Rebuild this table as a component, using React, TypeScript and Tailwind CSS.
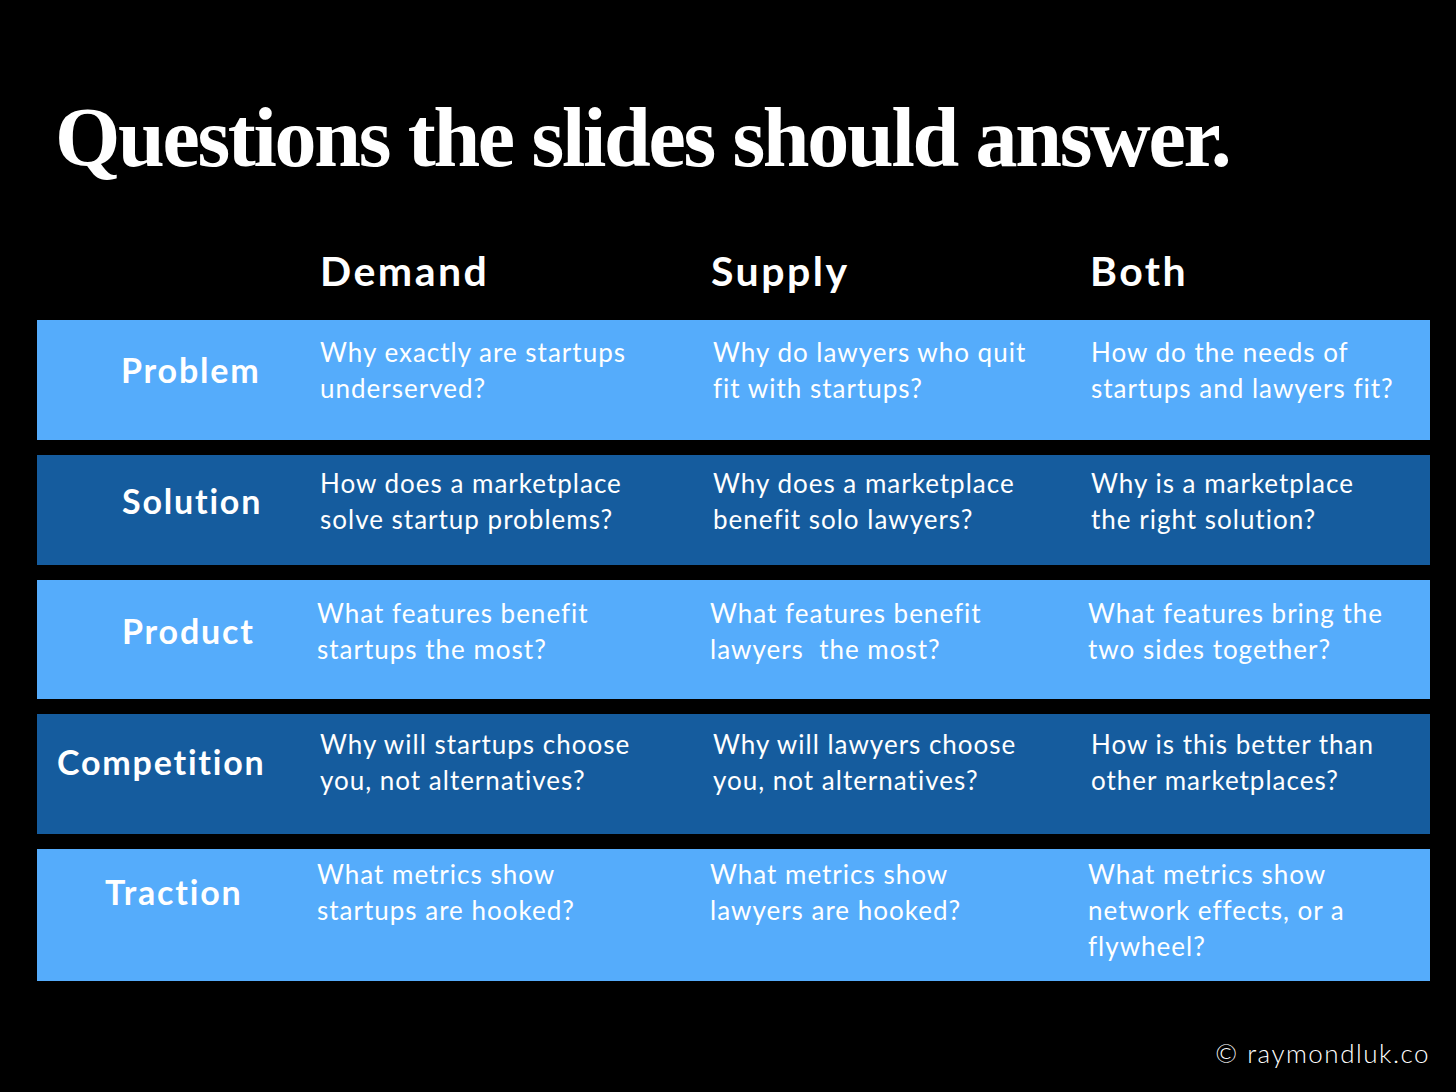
const rows = [
  {
    label: "Problem",
    dark: false,
    h: "h-[120px]",
    pt: "pt-[14px]",
    lpl: "pl-[84px]",
    shift: "",
    cells: [
      ["Why exactly are startups", "underserved?"],
      ["Why do lawyers who quit", "fit with startups?"],
      ["How do the needs of", "startups and lawyers fit?"],
    ],
  },
  {
    label: "Solution",
    dark: true,
    h: "h-[110px]",
    pt: "pt-[10px]",
    lpl: "pl-[85px]",
    shift: "",
    cells: [
      ["How does a marketplace", "solve startup problems?"],
      ["Why does a marketplace", "benefit solo lawyers?"],
      ["Why is a marketplace", "the right solution?"],
    ],
  },
  {
    label: "Product",
    dark: false,
    h: "h-[119px]",
    pt: "pt-[15px]",
    lpl: "pl-[85px]",
    shift: "-ml-[3px]",
    cells: [
      ["What features benefit", "startups the most?"],
      ["What features benefit", "lawyers\u00a0 the most?"],
      ["What features bring the", "two sides together?"],
    ],
  },
  {
    label: "Competition",
    dark: true,
    h: "h-[120px]",
    pt: "pt-[12px]",
    lpl: "pl-[20px]",
    shift: "",
    cells: [
      ["Why will startups choose", "you, not alternatives?"],
      ["Why will lawyers choose", "you, not alternatives?"],
      ["How is this better than", "other marketplaces?"],
    ],
  },
  {
    label: "Traction",
    dark: false,
    h: "h-[132px]",
    pt: "pt-[7px]",
    lpl: "pl-[68px]",
    shift: "-ml-[3px]",
    cells: [
      ["What metrics show", "startups are hooked?"],
      ["What metrics show", "lawyers are hooked?"],
      ["What metrics show", "network effects, or a", "flywheel?"],
    ],
  },
]

export default function App() {
  return (
    <div className="w-[1456px] h-[1092px] bg-black text-white overflow-hidden font-['Lato','Noto_Sans',sans-serif]">
      <h1 className="pl-[55px] pt-[96px] h-[222px] text-[84px] leading-[1] font-bold tracking-[-2.3px] font-['Liberation_Serif','DejaVu_Serif',serif]">
        Questions the slides should answer.
      </h1>

      <div className="flex h-[98px] items-start pt-[25px] text-[41px] font-bold leading-[48px] tracking-[2.5px]">
        <div className="w-[320px]" />
        <div className="w-[391px]">Demand</div>
        <div className="w-[379px]">Supply</div>
        <div>Both</div>
      </div>

      <div className="ml-[37px] w-[1393px] flex flex-col gap-[15px]">
        {rows.map((r) => (
          <div
            key={r.label}
            className={`flex items-start ${r.h} ${r.pt} ${r.dark ? "bg-[#155c9e]" : "bg-[#55acfb]"}`}
          >
            <div className={`w-[283px] ${r.lpl} text-[34px] font-bold leading-[72px] tracking-[1.8px]`}>
              {r.label}
            </div>
            <div className={`flex ${r.shift} text-[26px] leading-[36px] tracking-[1px]`}>
              {r.cells.map((c, i) => (
                <div key={i} className={i === 0 ? "w-[393px]" : i === 1 ? "w-[378px]" : "w-[330px]"}>
                  {c.map((line, j) => (
                    <div key={j} className="whitespace-pre">{line}</div>
                  ))}
                </div>
              ))}
            </div>
          </div>
        ))}
      </div>

      <div className="w-[1430px] pt-[54px] text-right text-[26px] font-light tracking-[1.5px] leading-[36px]">
        © raymondluk.co
      </div>
    </div>
  )
}
